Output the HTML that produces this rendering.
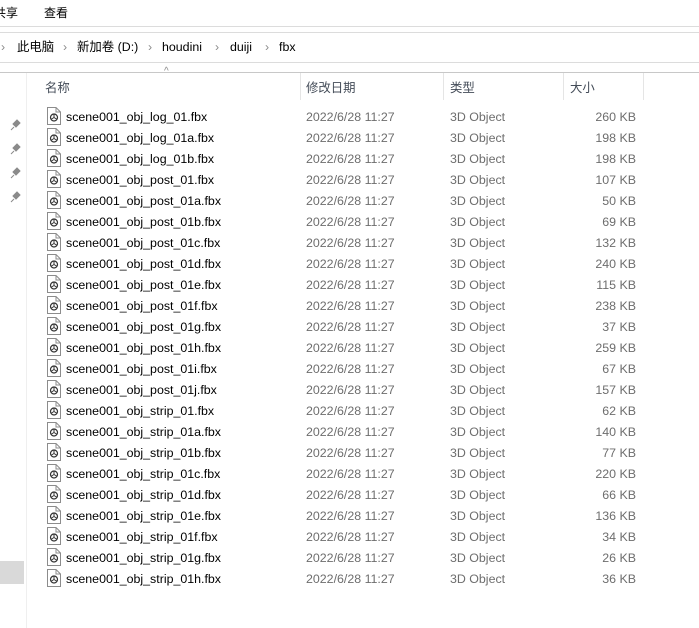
<!DOCTYPE html>
<html><head><meta charset="utf-8"><style>
body{margin:0;width:699px;height:628px;background:#fff;position:relative;overflow:hidden;font-family:"Liberation Sans","Noto Sans CJK SC",sans-serif;font-size:12px;color:#000}
.a{position:absolute;white-space:nowrap;line-height:16px}
.hl{position:absolute;left:0;width:699px;height:1px;background:#dcdcdc}
.g{color:#8a8a8a}
.b{top:39px;font-size:12.4px}
.row{position:absolute;left:0;width:699px;height:21px;font-size:12.4px;line-height:16px}
.row .n{position:absolute;left:66px;top:3px}
.row .d{position:absolute;left:306px;top:3px;color:#6d6d6d}
.row .t{position:absolute;left:450px;top:3px;color:#6d6d6d}
.row .s{position:absolute;right:63px;top:3px;color:#6d6d6d}
.row svg{position:absolute;left:47px;top:1px}
.sep{position:absolute;top:73px;width:1px;height:27px;background:#e5e5e5}
.pin{position:absolute;left:9px;width:12px;height:12px}
.hd{position:absolute;top:80px;color:#444c58;font-size:12.4px;line-height:16px}
</style></head><body>
<div class="a" style="left:-6px;top:5px">共享</div>
<div class="a" style="left:44px;top:5px">查看</div>
<div class="hl" style="top:26px"></div>
<div class="hl" style="top:32px"></div>
<div class="a g b" style="left:1px">›</div>
<div class="a b" style="left:17px">此电脑</div>
<div class="a g b" style="left:63px">›</div>
<div class="a b" style="left:77px">新加卷 (D:)</div>
<div class="a g b" style="left:148px">›</div>
<div class="a b" style="left:162px">houdini</div>
<div class="a g b" style="left:215px">›</div>
<div class="a b" style="left:230px">duiji</div>
<div class="a g b" style="left:265px">›</div>
<div class="a b" style="left:279px">fbx</div>
<div class="hl" style="top:62px"></div>
<div class="hl" style="top:72px;background:#c8c8c8"></div>
<div style="position:absolute;left:26px;top:73px;width:1px;height:555px;background:#efefef"></div>
<div style="position:absolute;left:0;top:561px;width:24px;height:23px;background:#d9d9d9"></div>
<div class="a g" style="left:164px;top:64px;font-size:10px">^</div>
<div class="hd" style="left:45px">名称</div>
<div class="hd" style="left:306px">修改日期</div>
<div class="hd" style="left:450px">类型</div>
<div class="hd" style="left:570px">大小</div>
<div class="sep" style="left:300px"></div><div class="sep" style="left:443px"></div><div class="sep" style="left:563px"></div><div class="sep" style="left:643px"></div>
<svg class="pin" style="top:119px" viewBox="0 0 12 12"><path d="M2 11L5 8M4 5L7 8L9 6L6 3Z M6 3L8 1L11 4L9 6" fill="#8a8a8a" stroke="#8a8a8a"/></svg>
<svg class="pin" style="top:143px" viewBox="0 0 12 12"><path d="M2 11L5 8M4 5L7 8L9 6L6 3Z M6 3L8 1L11 4L9 6" fill="#8a8a8a" stroke="#8a8a8a"/></svg>
<svg class="pin" style="top:167px" viewBox="0 0 12 12"><path d="M2 11L5 8M4 5L7 8L9 6L6 3Z M6 3L8 1L11 4L9 6" fill="#8a8a8a" stroke="#8a8a8a"/></svg>
<svg class="pin" style="top:191px" viewBox="0 0 12 12"><path d="M2 11L5 8M4 5L7 8L9 6L6 3Z M6 3L8 1L11 4L9 6" fill="#8a8a8a" stroke="#8a8a8a"/></svg>
<div id="rows"></div>
<script>
var f=[["log_01","260"],["log_01a","198"],["log_01b","198"],["post_01","107"],["post_01a","50"],["post_01b","69"],["post_01c","132"],["post_01d","240"],["post_01e","115"],["post_01f","238"],["post_01g","37"],["post_01h","259"],["post_01i","67"],["post_01j","157"],["strip_01","62"],["strip_01a","140"],["strip_01b","77"],["strip_01c","220"],["strip_01d","66"],["strip_01e","136"],["strip_01f","34"],["strip_01g","26"],["strip_01h","36"]];
var h="";
f.forEach(function(r,i){var y=106+i*21;
h+='<div class="row" style="top:'+y+'px"><svg width="14" height="18" viewBox="0 0 14 18"><path d="M0.5 0.5H9L13.5 5V17.5H0.5Z" fill="#fff" stroke="#8c8c8c"/><path d="M9 0.5V5H13.5" fill="none" stroke="#8c8c8c"/><circle cx="7" cy="10.5" r="3.5" fill="none" stroke="#333" stroke-width="1.2"/><path d="M7 10.5V7.5M7 10.5L4.5 12M7 10.5L9.5 12" stroke="#333"/></svg><span class="n">scene001_obj_'+r[0]+'.fbx</span><span class="d">2022/6/28 11:27</span><span class="t">3D Object</span><span class="s">'+r[1]+' KB</span></div>';});
document.getElementById("rows").innerHTML=h;
</script>
</body></html>
